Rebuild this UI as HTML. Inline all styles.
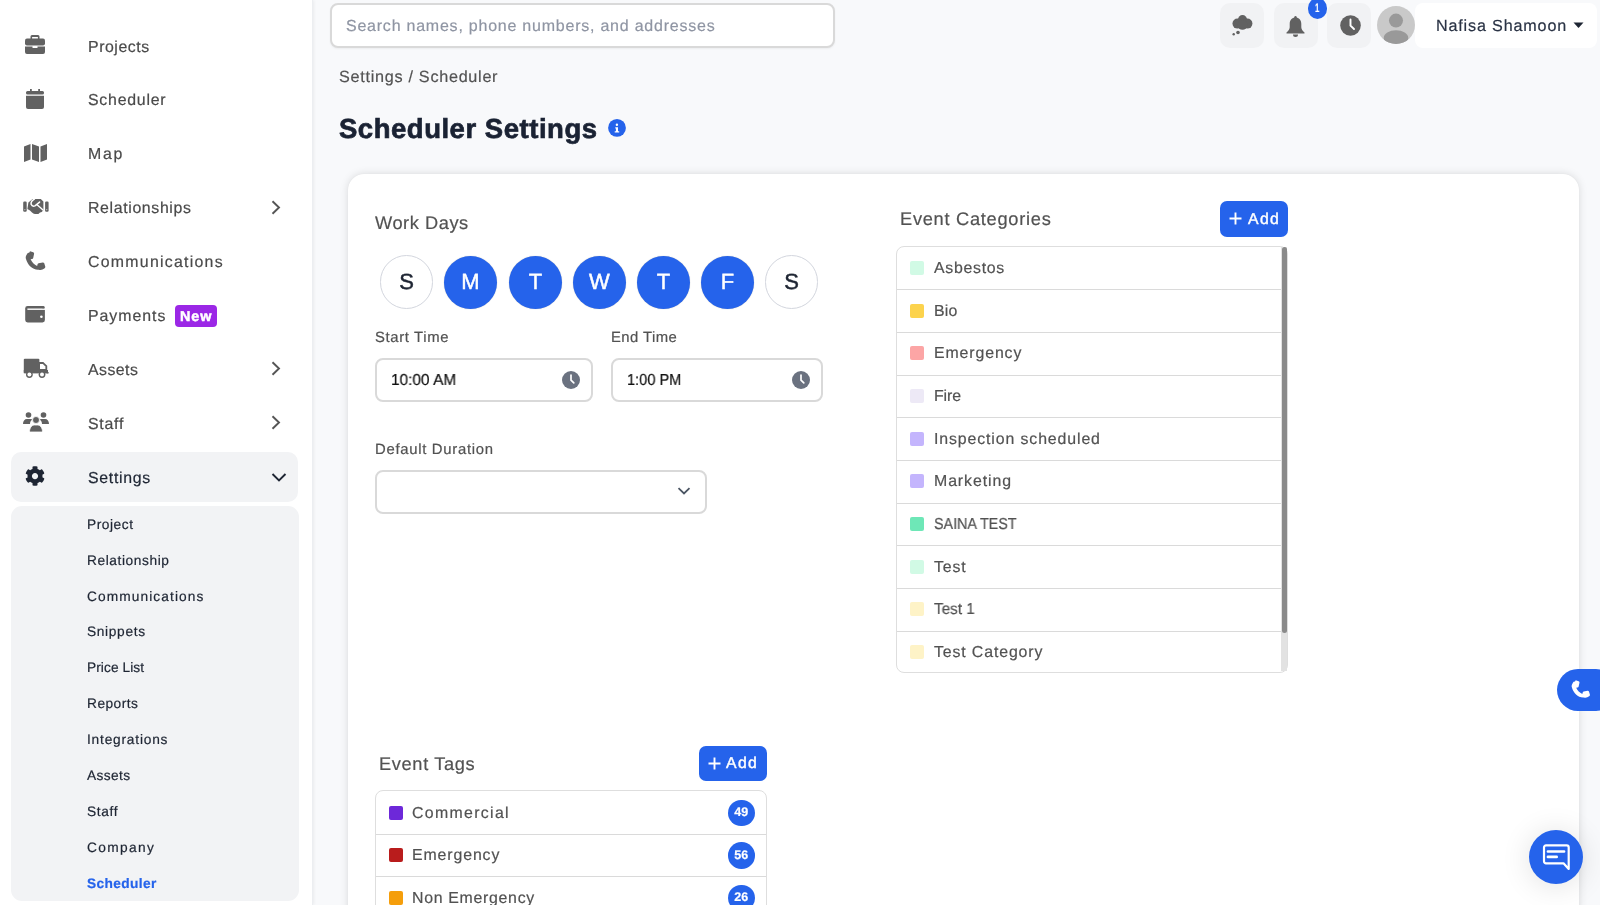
<!DOCTYPE html>
<html><head><meta charset="utf-8"><title>Scheduler Settings</title>
<style>
html,body{margin:0;padding:0}
body{width:1600px;height:905px;overflow:hidden;position:relative;background:#f8f9fb;font-family:"Liberation Sans",sans-serif;text-rendering:geometricPrecision}
.t{position:absolute;white-space:nowrap;line-height:1;will-change:transform;-webkit-text-stroke:0.2px currentColor}
.box{position:absolute;box-sizing:content-box}
.ic{position:absolute;display:block}
#sidebar{position:absolute;left:0;top:0;width:312px;height:905px;background:#fff;box-shadow:1px 0 3px rgba(0,0,0,.06);border-right:1px solid #eceef1}
</style></head><body>
<div id="sidebar"></div>
<div class="box" style="left:11px;top:452px;width:287px;height:50px;border-radius:10px;background:#f2f3f5"></div>
<div class="box" style="left:11px;top:506px;width:288px;height:395px;border-radius:11px;background:#f2f3f5"></div>
<svg class="ic" style="left:25px;top:35px" width="20" height="19" viewBox="0 0 20 19"><path d="M7 0h6a1.5 1.5 0 0 1 1.5 1.5V4h-1.6V2H7.1v2H5.5V1.5A1.5 1.5 0 0 1 7 0z" fill="#616161"/><rect x="0" y="3.5" width="20" height="7" rx="2" fill="#616161"/><path d="M0 11.6h7.5v1.4h5v-1.4H20V17a2 2 0 0 1-2 2H2a2 2 0 0 1-2-2z" fill="#616161"/></svg>
<svg class="ic" style="left:26px;top:89px" width="18" height="20" viewBox="0 0 18 20"><rect x="4" y="0" width="1.8" height="3" fill="#616161"/><rect x="12.2" y="0" width="1.8" height="3" fill="#616161"/><rect x="0" y="2" width="18" height="3.5" rx="1.5" fill="#616161"/><path d="M0 6.8h18V18a2 2 0 0 1-2 2H2a2 2 0 0 1-2-2z" fill="#616161"/></svg>
<svg class="ic" style="left:24px;top:144px" width="23" height="18" viewBox="0 0 23 18"><path d="M0 2.5L6.5 0v15.5L0 18z" fill="#616161"/><path d="M8 0l7 2.5V18L8 15.5z" fill="#616161"/><path d="M16.5 2.5L23 0v15.5L16.5 18z" fill="#616161"/></svg>
<svg class="ic" style="left:23px;top:198px" width="26" height="17" viewBox="0 0 26 17"><rect x="0.2" y="3.6" width="3.5" height="10.1" rx="1.2" fill="#616161"/><path d="M1.3 11.3h1.2l-.6 1.2z" fill="#fff"/><rect x="22.1" y="3.6" width="3.5" height="10.1" rx="1.2" fill="#616161"/><path d="M23.2 11.3h1.2l-.6 1.2z" fill="#fff"/><path d="M5.4 4.6L9.6 1.1h8.2l2.6 2.4v8.4l-1.6 2-1.8.6-1.6 1.4h-2.2l-1 .1-1.4-.2-1.8-1.4-2-1.8-2.6-1.6z" fill="#616161"/><path d="M11.4 1.2Q7.6 3.2 8.1 6.3Q9.2 8.9 12 7.9L16.6 4.1" stroke="#fff" stroke-width="1.5" fill="none" stroke-linecap="round"/><path d="M13.8 6.4L20.3 12.2" stroke="#fff" stroke-width="1.4" fill="none"/></svg>
<svg class="ic" style="left:24.5px;top:250.5px" width="21" height="21" viewBox="0 0 19.2 19.2"><path d="M4.6 0.3l2.9 0.9c.6.2.9.8.8 1.4l-.8 3.8c-.1.5-.6.9-1.1 1l-1.3.2c1.2 2.7 3.3 4.9 6 6.1l.3-1.3c.1-.5.5-1 1-1.1l3.8-.8c.6-.1 1.2.2 1.4.8l.9 2.9c.2.7-.1 1.4-.8 1.8l-1.7.9c-1 .5-2.2.6-3.3.2C7.1 17.6 2.4 12.9.9 7.4.5 6.3.6 5.1 1.1 4.1l.9-1.7c.4-.7 1.1-1 1.8-.8z" fill="#616161" transform="rotate(0)"/></svg>
<svg class="ic" style="left:25px;top:306px" width="20" height="17" viewBox="0 0 20 17"><rect x="0.2" y="0.1" width="19.7" height="16.4" rx="2.4" fill="#616161"/><rect x="2.4" y="2.5" width="18" height="1.4" fill="#fff"/><rect x="18.4" y="0" width="2" height="2.5" fill="#fff"/><circle cx="18.4" cy="1.25" r="1.25" fill="#616161"/><circle cx="16.4" cy="10.7" r="1.3" fill="#fff"/></svg>
<svg class="ic" style="left:23px;top:358px" width="26" height="21" viewBox="0 0 26 21"><rect x="0.8" y="0.7" width="15.6" height="14.5" rx="1" fill="#616161"/><path d="M16 4h4.3l3.9 3.8v7.4H16z" fill="#616161"/><path d="M17 6h2.9l2.5 2.4V11H17z" fill="#fff"/><rect x="0.8" y="12" width="24.2" height="3.2" fill="#616161"/><rect x="23.8" y="14" width="1.8" height="1.5" fill="#616161"/><circle cx="6.4" cy="16.6" r="3.4" fill="#616161"/><circle cx="19" cy="16.6" r="3.4" fill="#616161"/><circle cx="6.4" cy="16.6" r="2" fill="#fff"/><circle cx="19" cy="16.6" r="2" fill="#fff"/></svg>
<svg class="ic" style="left:23px;top:412px" width="26" height="21" viewBox="0 0 26 21"><circle cx="5.5" cy="3" r="2.8" fill="#616161"/><circle cx="20.5" cy="3" r="2.8" fill="#616161"/><path d="M0 12c0-3 1.5-5 4-5h3.5c.8 0 1.5.2 2 .6C8 8.5 7 10 7 12z" fill="#616161"/><path d="M26 12c0-3-1.5-5-4-5h-3.5c-.8 0-1.5.2-2 .6 1.5.9 2.5 2.4 2.5 4.4z" fill="#616161"/><circle cx="13" cy="8" r="3.5" fill="#616161" stroke="#fff" stroke-width="0.8"/><path d="M6.5 20c0-4 2-7 5-7h3c3 0 5 3 5 7z" fill="#616161" stroke="#fff" stroke-width="0.8"/></svg>
<svg class="ic" style="left:24.6px;top:466.2px" width="20" height="20" viewBox="0 0 512 512"><path fill="#1e2533" d="M487.4 315.7l-42.6-24.6c4.3-23.2 4.3-47 0-70.2l42.6-24.6c4.9-2.8 7.1-8.6 5.5-14-11.1-35.6-30-67.8-54.7-94.6-3.8-4.1-10-5.1-14.8-2.3L380.8 110c-17.9-15.4-38.5-27.3-60.8-35.1V25.8c0-5.6-3.9-10.5-9.4-11.7-36.7-8.2-74.3-7.8-109.2 0-5.5 1.2-9.4 6.1-9.4 11.7V75c-22.2 7.9-42.8 19.8-60.8 35.1L88.7 85.5c-4.9-2.8-11-1.9-14.8 2.3-24.7 26.7-43.6 58.9-54.7 94.6-1.7 5.4.6 11.2 5.5 14L67.3 221c-4.3 23.2-4.3 47 0 70.2l-42.6 24.6c-4.9 2.8-7.1 8.6-5.5 14 11.1 35.6 30 67.8 54.7 94.6 3.8 4.1 10 5.1 14.8 2.3l42.6-24.6c17.9 15.4 38.5 27.3 60.8 35.1v49.2c0 5.6 3.9 10.5 9.4 11.7 36.7 8.2 74.3 7.8 109.2 0 5.5-1.2 9.4-6.1 9.4-11.7v-49.2c22.2-7.9 42.8-19.8 60.8-35.1l42.6 24.6c4.9 2.8 11 1.9 14.8-2.3 24.7-26.7 43.6-58.9 54.7-94.6 1.5-5.5-.7-11.3-5.6-14.1zM256 336c-44.1 0-80-35.9-80-80s35.9-80 80-80 80 35.9 80 80-35.9 80-80 80z"/></svg>
<svg class="ic" style="left:271px;top:200px" width="10" height="15" viewBox="0 0 10 15"><path d="M1.5 1.2L8 7.5 1.5 13.8" stroke="#555" stroke-width="1.9" fill="none"/></svg>
<svg class="ic" style="left:271px;top:361px" width="10" height="15" viewBox="0 0 10 15"><path d="M1.5 1.2L8 7.5 1.5 13.8" stroke="#555" stroke-width="1.9" fill="none"/></svg>
<svg class="ic" style="left:271px;top:415px" width="10" height="15" viewBox="0 0 10 15"><path d="M1.5 1.2L8 7.5 1.5 13.8" stroke="#555" stroke-width="1.9" fill="none"/></svg>
<svg class="ic" style="left:271px;top:472px" width="16" height="11" viewBox="0 0 16 11"><path d="M1.5 2L8 8.5 14.5 2" stroke="#1e2533" stroke-width="1.9" fill="none"/></svg>
<div class="t" style="left:87.50px;top:40px;font-size:15.89px;letter-spacing:0.553px;color:#4a4a4a;">Projects</div>
<div class="t" style="left:87.50px;top:93px;font-size:15.89px;letter-spacing:0.761px;color:#4a4a4a;">Scheduler</div>
<div class="t" style="left:87.50px;top:147px;font-size:15.89px;letter-spacing:1.695px;color:#4a4a4a;">Map</div>
<div class="t" style="left:87.50px;top:201px;font-size:15.89px;letter-spacing:0.635px;color:#4a4a4a;">Relationships</div>
<div class="t" style="left:87.50px;top:255px;font-size:15.89px;letter-spacing:1.262px;color:#4a4a4a;">Communications</div>
<div class="t" style="left:87.50px;top:309px;font-size:15.89px;letter-spacing:0.965px;color:#4a4a4a;">Payments</div>
<div class="t" style="left:87.50px;top:363px;font-size:15.89px;letter-spacing:0.457px;color:#4a4a4a;">Assets</div>
<div class="t" style="left:87.50px;top:417px;font-size:15.89px;letter-spacing:0.756px;color:#4a4a4a;">Staff</div>
<div class="t" style="left:87.50px;top:471px;font-size:15.89px;letter-spacing:0.697px;color:#1e2533;">Settings</div>
<div class="box" style="left:175px;top:305px;width:42px;height:22px;border-radius:4px;background:#9b27e6"></div>
<div class="t" style="left:180.40px;top:310px;font-size:14.35px;letter-spacing:0.997px;color:#fff;font-weight:700;-webkit-text-stroke:0.5px #fff;">New</div>
<div class="t" style="left:87.00px;top:518px;font-size:13.73px;letter-spacing:0.541px;color:#1e2533;">Project</div>
<div class="t" style="left:87.00px;top:554px;font-size:13.73px;letter-spacing:0.591px;color:#1e2533;">Relationship</div>
<div class="t" style="left:87.00px;top:590px;font-size:13.73px;letter-spacing:1.095px;color:#1e2533;">Communications</div>
<div class="t" style="left:87.00px;top:625px;font-size:13.73px;letter-spacing:0.658px;color:#1e2533;">Snippets</div>
<div class="t" style="left:87.00px;top:661px;font-size:13.73px;letter-spacing:0.063px;color:#1e2533;">Price List</div>
<div class="t" style="left:87.00px;top:697px;font-size:13.73px;letter-spacing:0.481px;color:#1e2533;">Reports</div>
<div class="t" style="left:87.00px;top:733px;font-size:13.73px;letter-spacing:0.795px;color:#1e2533;">Integrations</div>
<div class="t" style="left:87.00px;top:769px;font-size:13.73px;letter-spacing:0.400px;color:#1e2533;">Assets</div>
<div class="t" style="left:87.00px;top:805px;font-size:13.73px;letter-spacing:0.657px;color:#1e2533;">Staff</div>
<div class="t" style="left:87.00px;top:841px;font-size:13.73px;letter-spacing:1.366px;color:#1e2533;">Company</div>
<div class="t" style="left:87.00px;top:877px;font-size:13.73px;letter-spacing:0.377px;color:#2563eb;font-weight:700;">Scheduler</div>
<div class="box" style="left:330px;top:3px;width:501px;height:41px;border:2px solid #d9d9d9;border-radius:8px;background:#fff;box-shadow:0 1px 2px rgba(0,0,0,.05)"></div>
<div class="t" style="left:346.00px;top:19px;font-size:15.99px;letter-spacing:0.777px;color:#8f95a3;">Search names, phone numbers, and addresses</div>
<div class="box" style="left:1220px;top:3px;width:44px;height:45px;border-radius:10px;background:#f1f2f4"></div>
<div class="box" style="left:1273.5px;top:3px;width:44px;height:45px;border-radius:10px;background:#f1f2f4"></div>
<div class="box" style="left:1327px;top:3px;width:44px;height:45px;border-radius:10px;background:#f1f2f4"></div>
<svg class="ic" style="left:1231px;top:15px" width="23" height="21" viewBox="0 0 23 21"><circle cx="11.5" cy="4.7" r="4.6" fill="#616161"/><circle cx="6.5" cy="8.6" r="5" fill="#616161"/><circle cx="16.4" cy="8.6" r="5" fill="#616161"/><circle cx="11.5" cy="10" r="4.8" fill="#616161"/><circle cx="7" cy="17.5" r="1.8" fill="#616161"/><circle cx="2.7" cy="19.3" r="1.2" fill="#616161"/></svg>
<svg class="ic" style="left:1286px;top:16px" width="19" height="21" viewBox="0 0 19 21"><circle cx="9.5" cy="1.2" r="1.2" fill="#616161"/><path d="M9.5 1.5c3.5 0 5.8 2.7 5.8 6.3v3.5c0 1.8 1.3 3.6 3.2 5.2v.9H.5v-.9c1.9-1.6 3.2-3.4 3.2-5.2V7.8c0-3.6 2.3-6.3 5.8-6.3z" fill="#616161"/><path d="M7 18.5h5a2.5 2.5 0 0 1-5 0z" fill="#616161"/></svg>
<div class="box" style="left:1307.8px;top:-2px;width:19.4px;height:21px;border-radius:10px/10.5px;background:#2563eb"></div>
<div class="t" style="left:1314.50px;top:2px;font-size:12.30px;transform:scaleX(0.6350);transform-origin:0 0;color:#fff;font-weight:700;">1</div>
<svg class="ic" style="left:1340px;top:15px" width="21" height="21" viewBox="0 0 21 21"><circle cx="10.5" cy="10.5" r="10.3" fill="#616161"/><path d="M10.5 4.5v6.2l3.5 3.3" stroke="#fff" stroke-width="1.9" fill="none" stroke-linecap="round"/></svg>
<svg class="ic" style="left:1377px;top:5.5px" width="38" height="38" viewBox="0 0 38 38"><defs><clipPath id="avc"><circle cx="19" cy="19" r="19"/></clipPath></defs><circle cx="19" cy="19" r="19" fill="#c9c9c9"/><g clip-path="url(#avc)"><circle cx="19" cy="14.6" r="7" fill="#999"/><ellipse cx="19" cy="32" rx="12.3" ry="7.8" fill="#999"/></g></svg>
<div class="box" style="left:1415px;top:3px;width:182px;height:45px;border-radius:8px;background:#fff"></div>
<div class="t" style="left:1435.50px;top:18px;font-size:16.14px;letter-spacing:0.843px;color:#2a3345;">Nafisa Shamoon</div>
<svg class="ic" style="left:1573px;top:22px" width="11" height="7" viewBox="0 0 11 7"><path d="M0.5 0.5h10L5.5 6z" fill="#1e2533"/></svg>
<div class="t" style="left:339.00px;top:69px;font-size:16.20px;letter-spacing:0.717px;color:#525252;">Settings / Scheduler</div>
<div class="t" style="left:339.00px;top:115px;font-size:27.47px;letter-spacing:0.540px;color:#1a2233;font-weight:700;-webkit-text-stroke:0.7px #1a2233;">Scheduler Settings</div>
<svg class="ic" style="left:608px;top:119.3px" width="18" height="18" viewBox="0 0 18 18"><circle cx="9" cy="8.9" r="8.9" fill="#2563eb"/><circle cx="8.9" cy="5.8" r="1.2" fill="#fff"/><path d="M7.3 8.3h2.7v3.9h1.2v1.3H6.7v-1.3h1.2V9.6h-.6z" fill="#fff"/></svg>
<div class="box" style="left:348px;top:174px;width:1231px;height:800px;border-radius:16px;background:#fff;box-shadow:0 0 8px rgba(0,0,0,.13),0 0 1px rgba(0,0,0,.06)"></div>
<div class="t" style="left:375.00px;top:214px;font-size:18.24px;letter-spacing:0.551px;color:#525252;">Work Days</div>
<div class="box" style="left:379.95px;top:255px;width:51.5px;height:51.5px;border-radius:50%;background:#fff;border:1px solid #d3d6de"></div>
<div class="t" style="left:380.20px;top:264px;width:53px;text-align:center;font-size:22px;line-height:36px;color:#1e2533;-webkit-text-stroke:0.45px #1e2533">S</div>
<div class="box" style="left:444.35px;top:255.5px;width:53px;height:53px;border-radius:50%;background:#2563eb;box-shadow:0 0 1px rgba(0,0,0,.3)"></div>
<div class="t" style="left:444.35px;top:264px;width:53px;text-align:center;font-size:22px;line-height:36px;color:#fff;-webkit-text-stroke:0.45px #fff">M</div>
<div class="box" style="left:508.50px;top:255.5px;width:53px;height:53px;border-radius:50%;background:#2563eb;box-shadow:0 0 1px rgba(0,0,0,.3)"></div>
<div class="t" style="left:508.50px;top:264px;width:53px;text-align:center;font-size:22px;line-height:36px;color:#fff;-webkit-text-stroke:0.45px #fff">T</div>
<div class="box" style="left:572.65px;top:255.5px;width:53px;height:53px;border-radius:50%;background:#2563eb;box-shadow:0 0 1px rgba(0,0,0,.3)"></div>
<div class="t" style="left:572.65px;top:264px;width:53px;text-align:center;font-size:22px;line-height:36px;color:#fff;-webkit-text-stroke:0.45px #fff">W</div>
<div class="box" style="left:636.80px;top:255.5px;width:53px;height:53px;border-radius:50%;background:#2563eb;box-shadow:0 0 1px rgba(0,0,0,.3)"></div>
<div class="t" style="left:636.80px;top:264px;width:53px;text-align:center;font-size:22px;line-height:36px;color:#fff;-webkit-text-stroke:0.45px #fff">T</div>
<div class="box" style="left:700.95px;top:255.5px;width:53px;height:53px;border-radius:50%;background:#2563eb;box-shadow:0 0 1px rgba(0,0,0,.3)"></div>
<div class="t" style="left:700.95px;top:264px;width:53px;text-align:center;font-size:22px;line-height:36px;color:#fff;-webkit-text-stroke:0.45px #fff">F</div>
<div class="box" style="left:764.85px;top:255px;width:51.5px;height:51.5px;border-radius:50%;background:#fff;border:1px solid #d3d6de"></div>
<div class="t" style="left:765.10px;top:264px;width:53px;text-align:center;font-size:22px;line-height:36px;color:#1e2533;-webkit-text-stroke:0.45px #1e2533">S</div>
<div class="t" style="left:375.00px;top:331px;font-size:14.86px;letter-spacing:0.642px;color:#525252;">Start Time</div>
<div class="t" style="left:611.00px;top:331px;font-size:14.86px;letter-spacing:0.423px;color:#525252;">End Time</div>
<div class="box" style="left:375px;top:358px;width:214px;height:40px;border:2px solid #d9d9d9;border-radius:8px;background:#fff"></div>
<div class="box" style="left:611px;top:358px;width:208px;height:40px;border:2px solid #d9d9d9;border-radius:8px;background:#fff"></div>
<div class="t" style="left:390.80px;top:373px;font-size:15.84px;transform:scaleX(0.9740);transform-origin:0 0;color:#111;">10:00 AM</div>
<div class="t" style="left:626.60px;top:373px;font-size:15.95px;transform:scaleX(0.9158);transform-origin:0 0;color:#111;">1:00 PM</div>
<svg class="ic" style="left:561.8px;top:370.5px" width="18" height="18" viewBox="0 0 18 18"><circle cx="9" cy="9" r="9" fill="#6b7280"/><path d="M9 4v5.2l2.8 2.6" stroke="#fff" stroke-width="1.7" fill="none" stroke-linecap="round"/></svg>
<svg class="ic" style="left:792.0px;top:370.5px" width="18" height="18" viewBox="0 0 18 18"><circle cx="9" cy="9" r="9" fill="#6b7280"/><path d="M9 4v5.2l2.8 2.6" stroke="#fff" stroke-width="1.7" fill="none" stroke-linecap="round"/></svg>
<div class="t" style="left:375.00px;top:443px;font-size:14.86px;letter-spacing:0.705px;color:#525252;">Default Duration</div>
<div class="box" style="left:375px;top:469.5px;width:328px;height:40px;border:2px solid #d9d9d9;border-radius:8px;background:#fff"></div>
<svg class="ic" style="left:677px;top:486px" width="14" height="10" viewBox="0 0 14 10"><path d="M1.5 2.2L7 7.5l5.5-5.3" stroke="#4b5563" stroke-width="1.8" fill="none"/></svg>
<div class="t" style="left:899.80px;top:210px;font-size:18.24px;letter-spacing:0.728px;color:#525252;">Event Categories</div>
<div class="box" style="left:1220.0px;top:201.3px;width:68.2px;height:35.8px;border-radius:7px;background:#2563eb"></div>
<svg class="ic" style="left:1229.0px;top:212.3px" width="13" height="13" viewBox="0 0 13 13"><path d="M6.5 0.5v12M0.5 6.5h12" stroke="#fff" stroke-width="1.9"/></svg>
<div class="t" style="left:1247.60px;top:212px;font-size:15.78px;letter-spacing:1.361px;color:#fff;-webkit-text-stroke:0.4px #fff;">Add</div>
<div class="box" style="left:896px;top:246px;width:390px;height:425px;border:1px solid #dedede;border-radius:8px;background:#fff;overflow:hidden"></div>
<div class="box" style="left:910px;top:261.00px;width:14px;height:14px;border-radius:2px;background:#d1fae5"></div>
<div class="t" style="left:933.50px;top:261px;font-size:15.89px;letter-spacing:0.716px;color:#525252;">Asbestos</div>
<div class="box" style="left:897px;top:289px;width:384px;height:1px;background:#dadada"></div>
<div class="box" style="left:910px;top:303.68px;width:14px;height:14px;border-radius:2px;background:#fcd34d"></div>
<div class="t" style="left:933.50px;top:304px;font-size:15.89px;letter-spacing:0.134px;color:#525252;">Bio</div>
<div class="box" style="left:897px;top:332px;width:384px;height:1px;background:#dadada"></div>
<div class="box" style="left:910px;top:346.36px;width:14px;height:14px;border-radius:2px;background:#fca5a5"></div>
<div class="t" style="left:933.50px;top:346px;font-size:15.89px;letter-spacing:0.886px;color:#525252;">Emergency</div>
<div class="box" style="left:897px;top:375px;width:384px;height:1px;background:#dadada"></div>
<div class="box" style="left:910px;top:389.04px;width:14px;height:14px;border-radius:2px;background:#ede9f6"></div>
<div class="t" style="left:933.50px;top:389px;font-size:15.89px;letter-spacing:-0.116px;color:#525252;">Fire</div>
<div class="box" style="left:897px;top:417px;width:384px;height:1px;background:#dadada"></div>
<div class="box" style="left:910px;top:431.72px;width:14px;height:14px;border-radius:2px;background:#c4b5fd"></div>
<div class="t" style="left:933.50px;top:432px;font-size:15.89px;letter-spacing:0.884px;color:#525252;">Inspection scheduled</div>
<div class="box" style="left:897px;top:460px;width:384px;height:1px;background:#dadada"></div>
<div class="box" style="left:910px;top:474.40px;width:14px;height:14px;border-radius:2px;background:#c4b5fd"></div>
<div class="t" style="left:933.50px;top:474px;font-size:15.89px;letter-spacing:0.910px;color:#525252;">Marketing</div>
<div class="box" style="left:897px;top:503px;width:384px;height:1px;background:#dadada"></div>
<div class="box" style="left:910px;top:517.08px;width:14px;height:14px;border-radius:2px;background:#6ee7b7"></div>
<div class="t" style="left:933.50px;top:517px;font-size:15.89px;transform:scaleX(0.9029);transform-origin:0 0;color:#525252;">SAINA TEST</div>
<div class="box" style="left:897px;top:545px;width:384px;height:1px;background:#dadada"></div>
<div class="box" style="left:910px;top:559.76px;width:14px;height:14px;border-radius:2px;background:#d1fae5"></div>
<div class="t" style="left:933.50px;top:560px;font-size:15.89px;letter-spacing:0.862px;color:#525252;">Test</div>
<div class="box" style="left:897px;top:588px;width:384px;height:1px;background:#dadada"></div>
<div class="box" style="left:910px;top:602.44px;width:14px;height:14px;border-radius:2px;background:#fef3c7"></div>
<div class="t" style="left:933.50px;top:602px;font-size:15.89px;transform:scaleX(0.9630);transform-origin:0 0;color:#525252;">Test 1</div>
<div class="box" style="left:897px;top:631px;width:384px;height:1px;background:#dadada"></div>
<div class="box" style="left:910px;top:645.12px;width:14px;height:14px;border-radius:2px;background:#fef3c7"></div>
<div class="t" style="left:933.50px;top:645px;font-size:15.89px;letter-spacing:0.870px;color:#525252;">Test Category</div>
<div class="box" style="left:1281px;top:247px;width:6px;height:424px;background:#e2e2e2"></div>
<div class="box" style="left:1281.5px;top:247px;width:5px;height:386px;border-radius:3px;background:#8a8a8a"></div>
<div class="t" style="left:378.70px;top:755px;font-size:18.24px;letter-spacing:0.651px;color:#525252;">Event Tags</div>
<div class="box" style="left:698.8px;top:745.7px;width:68.2px;height:35.8px;border-radius:7px;background:#2563eb"></div>
<svg class="ic" style="left:707.8px;top:756.7px" width="13" height="13" viewBox="0 0 13 13"><path d="M6.5 0.5v12M0.5 6.5h12" stroke="#fff" stroke-width="1.9"/></svg>
<div class="t" style="left:726.40px;top:756px;font-size:15.78px;letter-spacing:1.361px;color:#fff;-webkit-text-stroke:0.4px #fff;">Add</div>
<div class="box" style="left:375px;top:790px;width:390px;height:200px;border:1px solid #dedede;border-radius:8px;background:#fff"></div>
<div class="box" style="left:389px;top:805.50px;width:14px;height:14px;border-radius:2px;background:#6d28d9"></div>
<div class="t" style="left:412.00px;top:806px;font-size:15.89px;letter-spacing:1.329px;color:#525252;">Commercial</div>
<div class="box" style="left:728px;top:799.50px;width:26.5px;height:26.5px;border-radius:50%;background:#2563eb"></div>
<div class="t" style="left:728px;top:799.00px;width:26.5px;text-align:center;font-size:12.5px;line-height:26px;font-weight:700;color:#fff">49</div>
<div class="box" style="left:376px;top:834px;width:390px;height:1px;background:#dadada"></div>
<div class="box" style="left:389px;top:848.18px;width:14px;height:14px;border-radius:2px;background:#b91c1c"></div>
<div class="t" style="left:412.00px;top:848px;font-size:15.89px;letter-spacing:0.886px;color:#525252;">Emergency</div>
<div class="box" style="left:728px;top:842.18px;width:26.5px;height:26.5px;border-radius:50%;background:#2563eb"></div>
<div class="t" style="left:728px;top:841.68px;width:26.5px;text-align:center;font-size:12.5px;line-height:26px;font-weight:700;color:#fff">56</div>
<div class="box" style="left:376px;top:876px;width:390px;height:1px;background:#dadada"></div>
<div class="box" style="left:389px;top:890.86px;width:14px;height:14px;border-radius:2px;background:#f59e0b"></div>
<div class="t" style="left:412.00px;top:891px;font-size:15.89px;letter-spacing:0.700px;color:#525252;">Non Emergency</div>
<div class="box" style="left:728px;top:884.86px;width:26.5px;height:26.5px;border-radius:50%;background:#2563eb"></div>
<div class="t" style="left:728px;top:884.36px;width:26.5px;text-align:center;font-size:12.5px;line-height:26px;font-weight:700;color:#fff">26</div>
<div class="box" style="left:1557.2px;top:669px;width:60px;height:42.4px;border-radius:21.2px;background:#2563eb"></div>
<svg class="ic" style="left:1571.3px;top:680.4px" width="19.6" height="19.6" viewBox="0 0 19.2 19.2"><path d="M4.6 0.3l2.9 0.9c.6.2.9.8.8 1.4l-.8 3.8c-.1.5-.6.9-1.1 1l-1.3.2c1.2 2.7 3.3 4.9 6 6.1l.3-1.3c.1-.5.5-1 1-1.1l3.8-.8c.6-.1 1.2.2 1.4.8l.9 2.9c.2.7-.1 1.4-.8 1.8l-1.7.9c-1 .5-2.2.6-3.3.2C7.1 17.6 2.4 12.9.9 7.4.5 6.3.6 5.1 1.1 4.1l.9-1.7c.4-.7 1.1-1 1.8-.8z" fill="#fff"/></svg>
<div class="box" style="left:1529px;top:829.5px;width:54px;height:54px;border-radius:50%;background:#2563eb;box-shadow:0 2px 30px rgba(0,0,0,.12)"></div>
<svg class="ic" style="left:1542px;top:843px" width="29" height="28" viewBox="0 0 29 28"><path d="M4 2.4H24.7A2 2 0 0 1 26.7 4.4V26L21.5 20.3H4A2 2 0 0 1 2 18.3V4.4A2 2 0 0 1 4 2.4z" stroke="#fff" stroke-width="2.2" fill="none" stroke-linejoin="round"/><path d="M5.9 8.5H22.1M5.9 13.9H14.7" stroke="#fff" stroke-width="2.6" stroke-linecap="round"/></svg>
</body></html>
